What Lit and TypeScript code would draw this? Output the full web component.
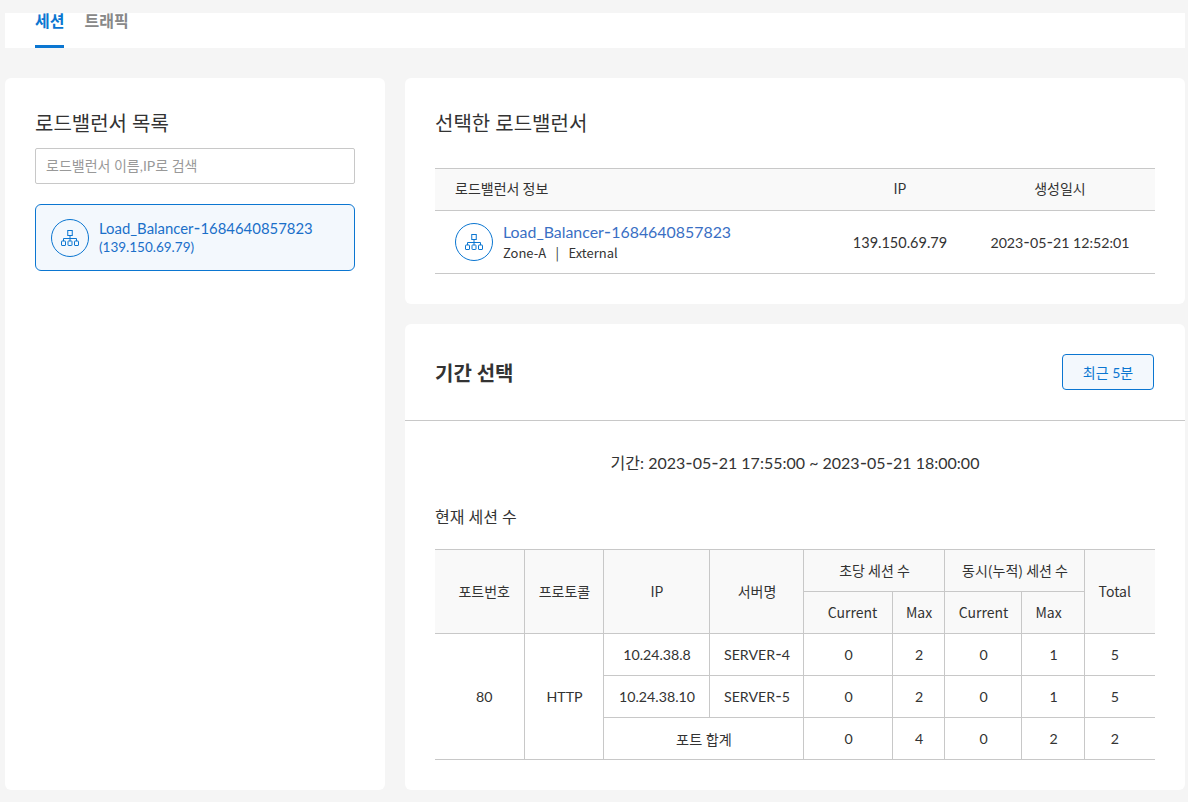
import { LitElement, html, css } from "lit";
import { customElement } from "lit/decorators.js";

const icon = html`<span class="ico"><svg width="20" height="20" viewBox="0 0 20 20" fill="none" stroke="#0b76d1" stroke-width="1"><rect x="7.75" y="2.5" width="4.5" height="5"/><path d="M10 7.5v3M3.5 13v-2.5h13V13M10 10.5V13"/><rect x="1.5" y="13" width="4" height="4.5" rx=".5"/><rect x="8" y="13" width="4" height="4.5" rx=".5"/><rect x="14.5" y="13" width="4" height="4.5" rx=".5"/></svg></span>`;

/* The reference draws a longer hyphen than the installed Lato does. */
const dashed = (s: string) => {
  const parts = s.split("-");
  return parts.map((p, i) => (i === 0 ? html`${p}` : html`<span class="d">-</span>${p}`));
};

@customElement("app-root")
export class AppRoot extends LitElement {
  static styles = css`
    :host { display: block; width: 1188px; height: 802px; overflow: hidden; background: #f5f5f5;
      font-family: Lato, "Noto Sans CJK KR", sans-serif; color: #333; font-size: 14px; box-sizing: border-box; }
    * { box-sizing: border-box; }
    .d { font-size: 1.25em; line-height: 0; }
    .page { display: flex; flex-direction: column; gap: 30px; padding: 13px 3px 0 5px; }
    .tabs { background: #fff; height: 35px; display: flex; gap: 20px; padding: 0 30px; }
    .tab { height: 35px; line-height: 16px; font-size: 16px; color: #888; font-weight: 700; }
    .tab.on { color: #0b76d1; border-bottom: 3px solid #0b76d1; }
    .main { display: flex; gap: 20px; height: 712px; }
    .card { background: #fff; border-radius: 6px; }
    .left { width: 380px; padding: 30px; display: flex; flex-direction: column; }
    .right { flex: 1; display: flex; flex-direction: column; gap: 20px; min-width: 0; }
    h2 { margin: 0; font-size: 20px; font-weight: 400; line-height: 30px; color: #333; }
    .search { height: 36px; margin-top: 10px; border: 1px solid #c8c8c8; border-radius: 2px; padding: 0 10px 2px; display: flex; align-items: center; font-size: 14px; color: #999; }
    .item { margin-top: 20px; height: 67px; border: 1px solid #0b76d1; border-radius: 6px; background: #f3f8fd; display: flex; align-items: center; gap: 10px; padding: 0 15px; color: #1a6fc9; line-height: 19px; }
    .item .name { font-size: 14.9px; }
    .item .addr { font-size: 13.5px; }
    .ico { width: 38px; height: 38px; border: 1px solid #0b76d1; border-radius: 50%; display: flex; align-items: center; justify-content: center; flex: none; }
    .sel { height: 226px; padding: 30px; }
    .sel table { margin-top: 30px; }
    table { width: 100%; border-collapse: collapse; table-layout: fixed; }
    th { font-family: "Noto Sans CJK KR", sans-serif; }
    .sel th { height: 42px; padding: 0 0 3px; background: #f9f9f9; font-weight: 400; font-size: 14px; border-top: 1px solid #c8c8c8; border-bottom: 1px solid #c8c8c8; }
    .sel th:first-child { text-align: left; padding-left: 20px; }
    .sel td { height: 63px; padding: 0; border-bottom: 1px solid #c8c8c8; text-align: center; font-size: 14.5px; }
    .sel td.date { font-size: 14.2px; }
    .info { display: flex; align-items: center; gap: 10px; padding-left: 20px; text-align: left; }
    .link { color: #3a6fc4; font-size: 15.9px; line-height: 20px; }
    .sub { font-family: "Noto Sans CJK KR", sans-serif; font-size: 13px; line-height: 20px; color: #333; margin-top: 1px; }
    .sub i { font-style: normal; margin: 0 6.5px; }
    .period { flex: 1; display: flex; flex-direction: column; }
    .phead { height: 97px; border-bottom: 1px solid #c8c8c8; display: flex; align-items: center; justify-content: space-between; padding: 0 31px 0 30px; }
    .phead b { font-size: 20px; font-weight: 700; color: #333; }
    .btn { width: 92px; height: 36px; border: 1px solid #0b76d1; border-radius: 4px; background: #f3f8fd; color: #0b76d1; display: flex; align-items: center; justify-content: center; font-size: 14px; }
    .pbody { padding: 30px; flex: 1; }
    .range { text-align: center; font-size: 16px; line-height: 24px; color: #333; }
    .cnt { margin-top: 30px; font-size: 16px; line-height: 24px; margin-bottom: 20px; }
    .stats th, .stats td { height: 42px; border: 1px solid #c8c8c8; text-align: center; font-weight: 400; padding: 0 0 0 2px; font-size: 14px; }
    .stats td { font-size: 14.2px; }
    .stats th { background: #f9f9f9; padding-bottom: 2px; }
    .stats tr > :first-child { border-left: 0; }
    .stats tr > :last-child { border-right: 0; padding-right: 10px; }
    .stats td:last-child, .stats th.total { padding-left: 0; }
    .stats th:first-child, .stats td.pl { padding-left: 10px; }
  `;

  render() {
    return html`<div class="page">
      <div class="tabs"><div class="tab on">세션</div><div class="tab">트래픽</div></div>
      <div class="main">
        <div class="card left">
          <h2>로드밸런서 목록</h2>
          <div class="search">로드밸런서 이름,IP로 검색</div>
          <div class="item">${icon}<div><div class="name">${dashed("Load_Balancer-1684640857823")}</div><div class="addr">(139.150.69.79)</div></div></div>
        </div>
        <div class="right">
          <div class="card sel">
            <h2>선택한 로드밸런서</h2>
            <table>
              <colgroup><col /><col style="width:130px" /><col style="width:190px" /></colgroup>
              <tr><th>로드밸런서 정보</th><th>IP</th><th>생성일시</th></tr>
              <tr>
                <td><div class="info">${icon}<div><div class="link">${dashed("Load_Balancer-1684640857823")}</div><div class="sub">Zone-A<i> | </i>External</div></div></div></td>
                <td>139.150.69.79</td><td class="date">${dashed("2023-05-21 12:52:01")}</td>
              </tr>
            </table>
          </div>
          <div class="card period">
            <div class="phead"><b>기간 선택</b><div class="btn">최근 5분</div></div>
            <div class="pbody">
              <div class="range">기간: ${dashed("2023-05-21 17:55:00")} ~ ${dashed("2023-05-21 18:00:00")}</div>
              <div class="cnt">현재 세션 수</div>
              <table class="stats">
                <colgroup>
                  <col style="width:89px" /><col style="width:79px" /><col style="width:106px" /><col style="width:94px" />
                  <col style="width:89px" /><col style="width:52px" /><col style="width:77px" /><col style="width:63px" /><col style="width:71px" />
                </colgroup>
                <tr><th rowspan="2">포트번호</th><th rowspan="2">프로토콜</th><th rowspan="2">IP</th><th rowspan="2">서버명</th><th colspan="2">초당 세션 수</th><th colspan="2">동시(누적) 세션 수</th><th class="total" rowspan="2">Total</th></tr>
                <tr><th>Current</th><th>Max</th><th>Current</th><th>Max</th></tr>
                <tr><td class="pl" rowspan="3">80</td><td rowspan="3">HTTP</td><td>10.24.38.8</td><td>${dashed("SERVER-4")}</td><td>0</td><td>2</td><td>0</td><td>1</td><td>5</td></tr>
                <tr><td>10.24.38.10</td><td>${dashed("SERVER-5")}</td><td>0</td><td>2</td><td>0</td><td>1</td><td>5</td></tr>
                <tr><td colspan="2">포트 합계</td><td>0</td><td>4</td><td>0</td><td>2</td><td>2</td></tr>
              </table>
            </div>
          </div>
        </div>
      </div>
    </div>`;
  }
}
